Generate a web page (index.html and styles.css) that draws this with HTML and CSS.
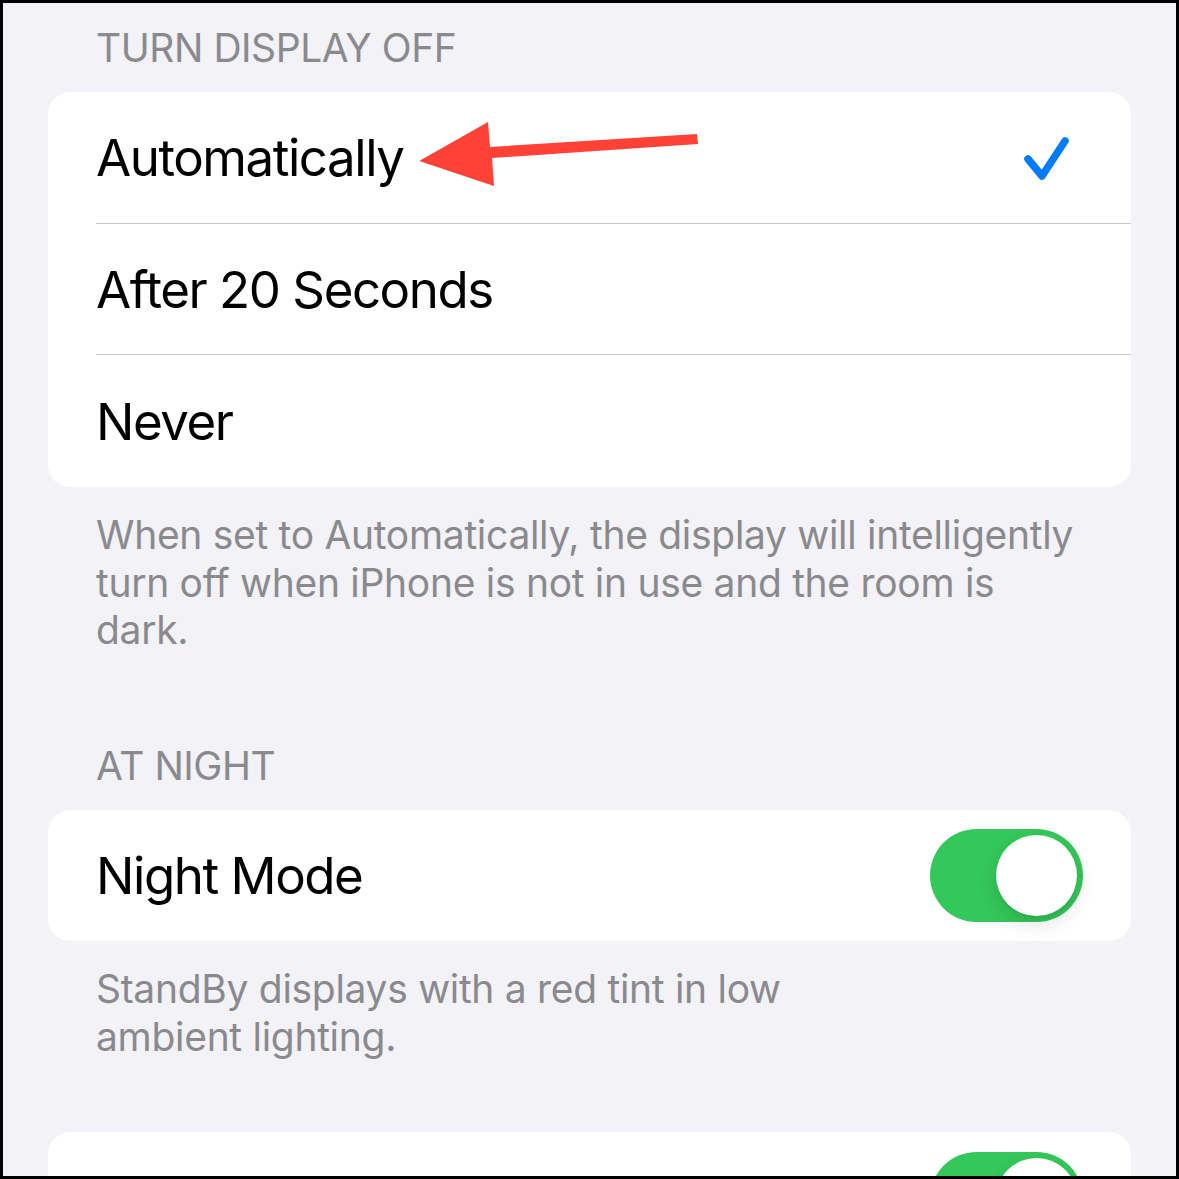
FILE: index.html
```html
<!DOCTYPE html>
<html lang="en">
<head>
  <meta charset="UTF-8">
  <meta name="viewport" content="width=device-width, initial-scale=1.0">
  <title>StandBy</title>
  <link rel="stylesheet" href="styles.css">
</head>
<body>

<main class="screen">
  <section class="group">
    <h2 class="group-header">TURN DISPLAY OFF</h2>
    <ul class="card">
      <li class="row">
        <div class="row-body">
          <span class="row-title">Automatically</span>
          <svg class="check" width="48" height="48" viewBox="0 0 48 48">
            <path d="M5 26 L19 43 L42 8" fill="none" stroke="#007aff" stroke-width="7.5" stroke-linecap="round" stroke-linejoin="round"/>
          </svg>
        </div>
        <svg class="callout" width="290" height="80" viewBox="0 0 290 80">
          <path d="M277 13 L278 23 L72 37 L74 65 L-1 40 L68 1 L70 26 Z" fill="#ff4136"/>
        </svg>
      </li>
      <li class="row">
        <div class="row-body">
          <span class="row-title">After 20 Seconds</span>
        </div>
      </li>
      <li class="row">
        <div class="row-body">
          <span class="row-title">Never</span>
        </div>
      </li>
    </ul>
    <p class="group-footer">When set to Automatically, the display will intelligently turn off when iPhone is not in use and the room is dark.</p>
  </section>

  <section class="group">
    <h2 class="group-header">AT NIGHT</h2>
    <ul class="card">
      <li class="row">
        <div class="row-body">
          <span class="row-title">Night Mode</span>
          <span class="switch on"><span class="knob"></span></span>
        </div>
      </li>
    </ul>
    <p class="group-footer">StandBy displays with a red tint in low<br>ambient lighting.</p>
  </section>

  <section class="group group-last">
    <ul class="card">
      <li class="row">
        <div class="row-body">
          <span class="row-title"></span>
          <span class="switch on"><span class="knob"></span></span>
        </div>
      </li>
    </ul>
  </section>
</main>

</body>
</html>
```

FILE: styles.css
```css
* {
  box-sizing: border-box;
}

body {
  margin: 0;
  height: 100vh;
  overflow: hidden;
  background-color: #000;
  font-family: Inter, "Noto Sans", sans-serif;
}

.screen {
  margin: 3px;
  height: calc(100vh - 6px);
  overflow: hidden;
  background-color: #f2f2f7;
  padding: 21px 45px 0 45px;
}

.group {
  margin-bottom: 88px;
}

.group:nth-child(2) {
  margin-bottom: 72px;
}

.group-header {
  margin: 0 0 21px 0;
  padding-left: 48px;
  font-size: 39px;
  line-height: 47px;
  font-weight: 400;
  color: #8a8a8e;
  letter-spacing: -0.45px;
}

.card {
  list-style: none;
  margin: 0;
  padding: 0;
  background-color: #fff;
  border-radius: 22px;
}

.row {
  position: relative;
  padding-left: 48px;
  height: 131.7px;
}

.row-body {
  display: flex;
  align-items: center;
  justify-content: space-between;
  height: 100%;
  padding-right: 48px;
  border-bottom: 1.5px solid #c8c8cc;
}

.row:last-child .row-body {
  border-bottom: none;
}

.row-title {
  font-size: 51px;
  color: #000;
  letter-spacing: -1.45px;
}

.check {
  margin-right: 12px;
}

.callout {
  position: absolute;
  left: 372px;
  top: 29px;
}

.group-footer {
  margin: 24px 0 0 0;
  padding: 0 48px;
  font-size: 39px;
  line-height: 47.5px;
  color: #8a8a8e;
  letter-spacing: -0.3px;
}

.switch {
  position: relative;
  width: 153px;
  height: 93px;
  border-radius: 47px;
  background-color: #34c759;
}

.switch .knob {
  position: absolute;
  top: 6px;
  right: 6px;
  width: 81px;
  height: 81px;
  border-radius: 50%;
  background-color: #fff;
  box-shadow: 0 8px 20px rgba(0, 0, 0, 0.12), 0 3px 3px rgba(0, 0, 0, 0.05);
}
```
